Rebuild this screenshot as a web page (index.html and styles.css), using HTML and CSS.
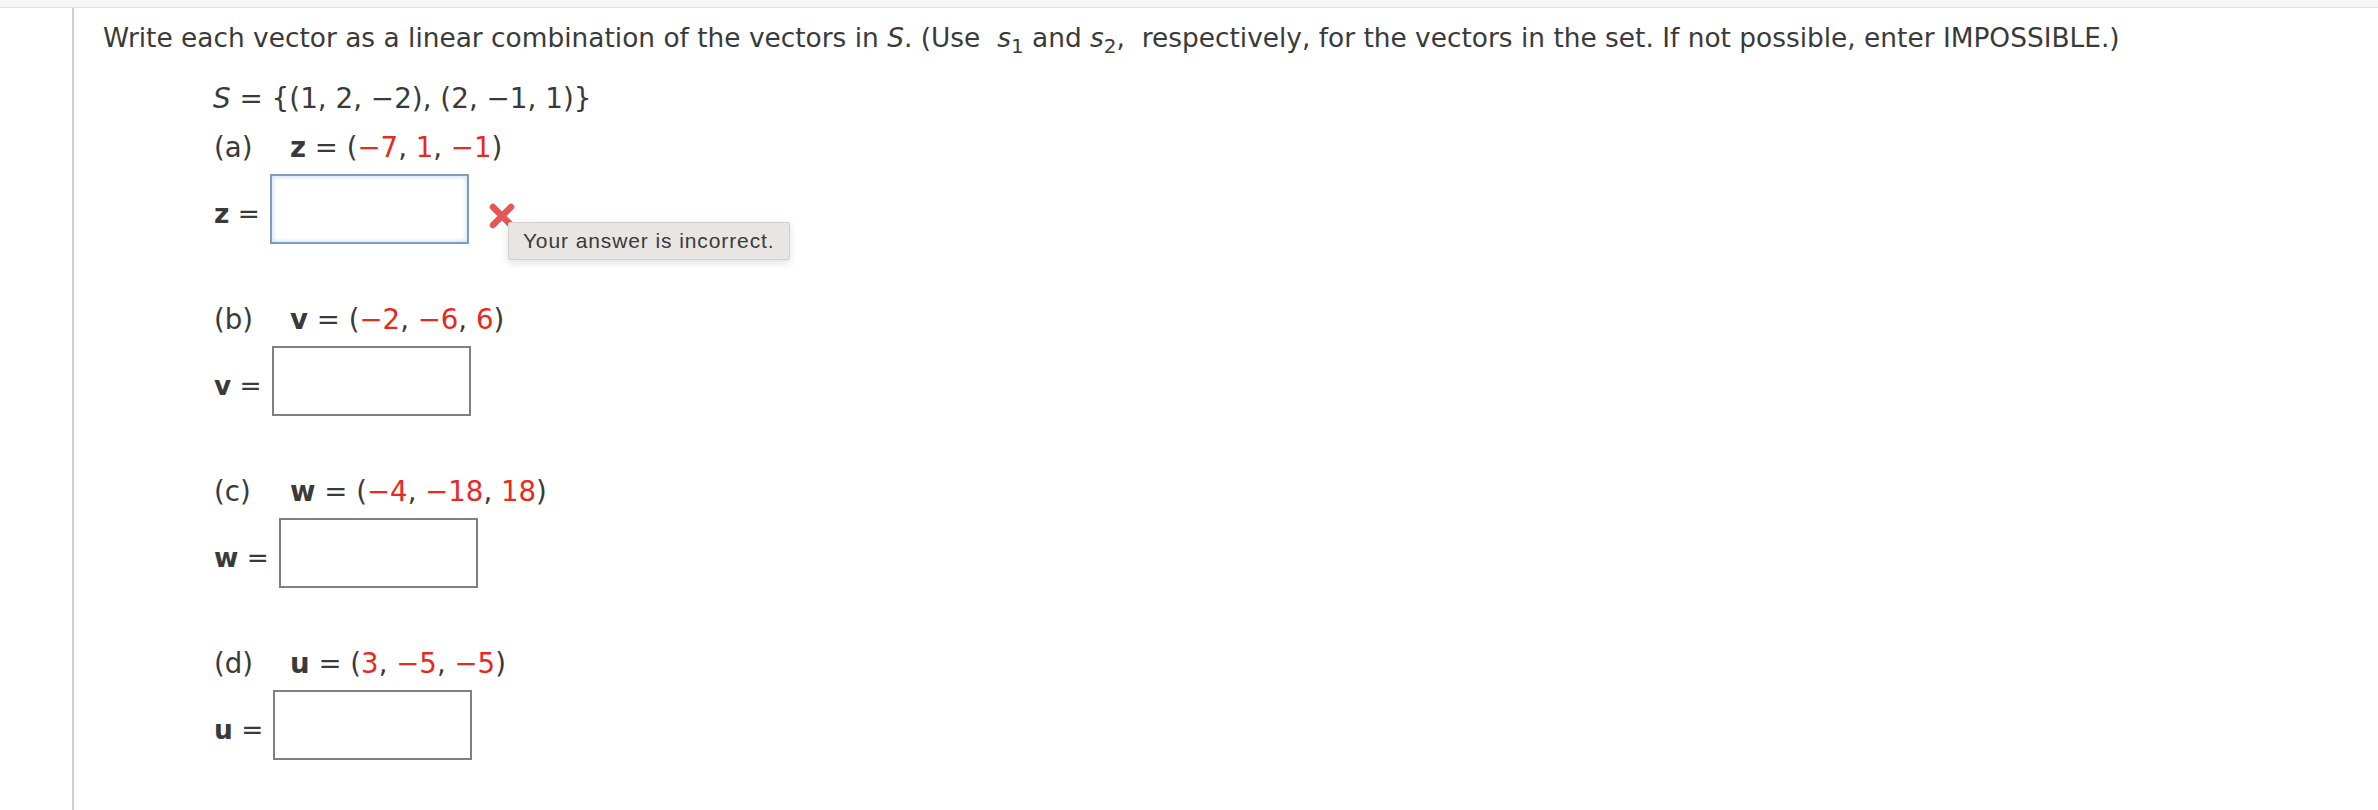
FILE: index.html
```html
<!DOCTYPE html>
<html>
<head>
<meta charset="utf-8">
<link rel="stylesheet" href="styles.css">
</head>
<body>
<div class="topbar"></div>
<div class="page">
  <div class="prompt">Write each vector as a linear combination of the vectors in <i>S</i>. (Use &nbsp;<i>s</i><sub>1</sub> and <i>s</i><sub>2</sub>, &nbsp;respectively, for the vectors in the set. If not possible, enter IMPOSSIBLE.)</div>
  <div class="set"><i>S</i> = {(1, 2, −2), (2, −1, 1)}</div>

  <div class="part">
    <div class="title"><span class="plabel">(a)</span><b>z</b> = (<span class="red">−7</span>, <span class="red">1</span>, <span class="red">−1</span>)</div>
    <div class="answer">
      <span class="alabel"><b>z</b> =</span>
      <div class="box focused"></div>
      <div class="mark">
        <svg class="xicon" viewBox="0 0 28 28" width="28" height="28"><path d="M5 5 L23 23 M23 5 L5 23" stroke="#e55757" stroke-width="6.5" stroke-linecap="round"/></svg>
        <div class="tooltip">Your answer is incorrect.</div>
      </div>
    </div>
  </div>

  <div class="part">
    <div class="title"><span class="plabel">(b)</span><b>v</b> = (<span class="red">−2</span>, <span class="red">−6</span>, <span class="red">6</span>)</div>
    <div class="answer">
      <span class="alabel"><b>v</b> =</span>
      <div class="box"></div>
    </div>
  </div>

  <div class="part">
    <div class="title"><span class="plabel">(c)</span><b>w</b> = (<span class="red">−4</span>, <span class="red">−18</span>, <span class="red">18</span>)</div>
    <div class="answer">
      <span class="alabel"><b>w</b> =</span>
      <div class="box"></div>
    </div>
  </div>

  <div class="part">
    <div class="title"><span class="plabel">(d)</span><b>u</b> = (<span class="red">3</span>, <span class="red">−5</span>, <span class="red">−5</span>)</div>
    <div class="answer">
      <span class="alabel"><b>u</b> =</span>
      <div class="box"></div>
    </div>
  </div>
</div>
</body>
</html>
```

FILE: styles.css
```css
html, body {
  margin: 0;
  padding: 0;
  background: #ffffff;
}
body {
  font-family: "DejaVu Sans", Verdana, sans-serif;
  font-size: 26.4px;
  color: #3a3a3a;
  height: 810px;
  overflow: hidden;
}
.topbar {
  height: 7px;
  background: #f5f5f5;
  border-bottom: 1px solid #e0e0e0;
}
.page {
  margin-left: 72px;
  border-left: 2px solid #cfcfcf;
  padding-left: 29px;
  padding-top: 15px;
  height: 802px;
  box-sizing: border-box;
}
.prompt {
  line-height: 30px;
  white-space: nowrap;
}
.prompt sub {
  font-size: 20px;
  line-height: 0;
  vertical-align: -6px;
}
.set {
  font-size: 27.8px;
  line-height: 30px;
  margin-top: 31px;
  margin-left: 110px;
}
.part {
  margin-left: 111px;
}
.set + .part {
  margin-top: 19px;
}
.part + .part {
  margin-top: 61px;
}
.title {
  font-size: 27.6px;
  line-height: 30px;
}
.plabel {
  display: inline-block;
  width: 76px;
}
.red {
  color: #e8291e;
}
.answer {
  display: flex;
  align-items: center;
  margin-top: 11px;
  height: 70px;
}
.alabel {
  padding-top: 8px;
  margin-right: 10px;
  white-space: pre;
}
.box {
  width: 199px;
  height: 70px;
  box-sizing: border-box;
  border: 2px solid #808080;
  background: #fff;
}
.box.focused {
  border-color: #7d9cc4;
  box-shadow: inset 0 0 4px 1px #cfe0f7;
}
.mark {
  position: relative;
  margin-left: 19px;
  width: 28px;
  height: 28px;
  align-self: flex-start;
  margin-top: 28px;
}
.xicon {
  display: block;
  filter: blur(0.7px);
}
.tooltip {
  position: absolute;
  left: 20px;
  top: 20px;
  background: #e8e5e2;
  border: 1px solid #d3d0cc;
  border-radius: 2px;
  box-shadow: 0 3px 8px rgba(0,0,0,0.12);
  font-family: "Liberation Sans", Arial, sans-serif;
  font-size: 21px;
  letter-spacing: 0.9px;
  line-height: 24px;
  padding: 6px 14px 6px 14px;
  white-space: nowrap;
  color: #3a3a3a;
}
```
